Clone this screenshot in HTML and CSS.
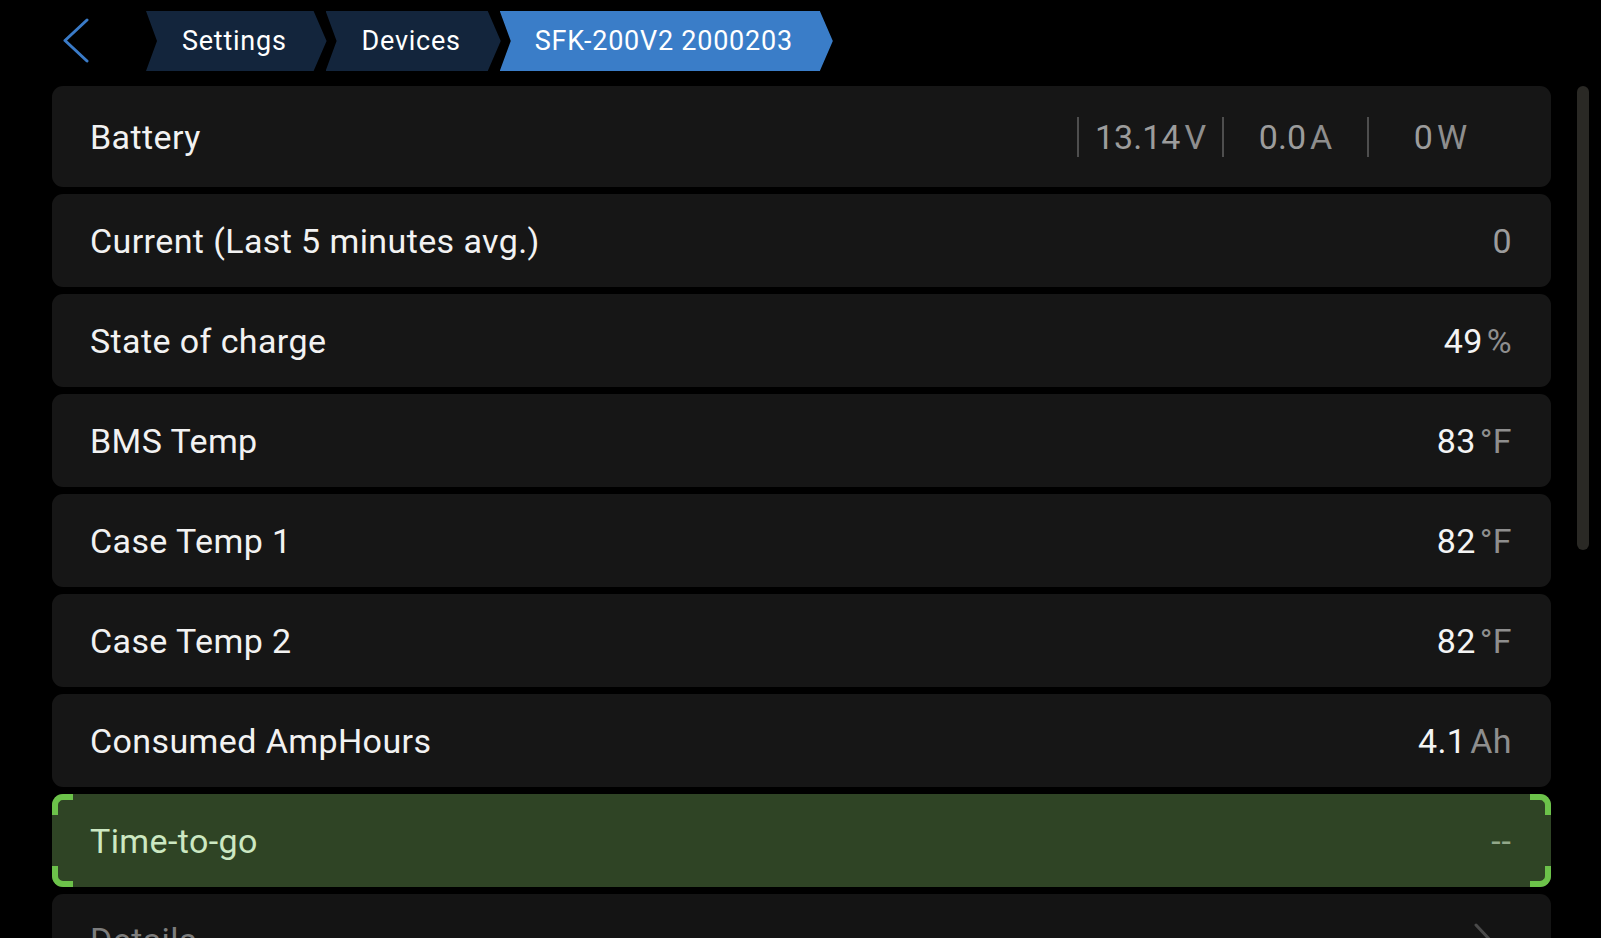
FILE: index.html
```html
<!DOCTYPE html>
<html>
<head>
<meta charset="utf-8">
<link rel="stylesheet" href="styles.css">
</head>
<body>
<div class="screen">
  <header class="header">
    <svg class="back" width="28" height="46" viewBox="0 0 28 46"><path d="M25 2 L3 22.5 L25 43" fill="none" stroke="#3a7bc8" stroke-width="3" stroke-linecap="round" stroke-linejoin="round"/></svg>
    <nav class="crumbs">
      <div class="crumb dark">Settings</div>
      <div class="crumb dark">Devices</div>
      <div class="crumb active">SFK-200V2 2000203</div>
    </nav>
  </header>
  <div class="body">
    <div class="list">
      <div class="row tall">
        <span class="label">Battery</span>
        <div class="cells">
          <div class="cell"><span class="dim">13.14</span><span class="unit">V</span></div>
          <div class="cell"><span class="dim">0.0</span><span class="unit">A</span></div>
          <div class="cell"><span class="dim">0</span><span class="unit">W</span></div>
        </div>
      </div>
      <div class="row">
        <span class="label">Current (Last 5 minutes avg.)</span>
        <span class="value"><span class="dim">0</span></span>
      </div>
      <div class="row">
        <span class="label">State of charge</span>
        <span class="value"><span class="num">49</span><span class="unit">%</span></span>
      </div>
      <div class="row">
        <span class="label">BMS Temp</span>
        <span class="value"><span class="num">83</span><span class="unit">°F</span></span>
      </div>
      <div class="row">
        <span class="label">Case Temp 1</span>
        <span class="value"><span class="num">82</span><span class="unit">°F</span></span>
      </div>
      <div class="row">
        <span class="label">Case Temp 2</span>
        <span class="value"><span class="num">82</span><span class="unit">°F</span></span>
      </div>
      <div class="row">
        <span class="label">Consumed AmpHours</span>
        <span class="value"><span class="num">4.1</span><span class="unit">Ah</span></span>
      </div>
      <div class="row focus">
        <span class="label">Time-to-go</span>
        <span class="value"><span class="dash">--</span></span>
        <span class="corner tl"></span><span class="corner tr"></span>
        <span class="corner bl"></span><span class="corner br"></span>
      </div>
      <div class="row details">
        <span class="label">Details</span>
        <svg class="chev" width="20" height="40" viewBox="0 0 20 40"><path d="M2 2 L17 18 L2 34" fill="none" stroke="#4a4a4a" stroke-width="3" stroke-linecap="round"/></svg>
      </div>
    </div>
    <div class="scrollbar"></div>
  </div>
</div>
</body>
</html>
```
FILE: styles.css
```css
html, body {
  margin: 0;
  padding: 0;
  background: #000;
}
body {
  width: 1601px;
  height: 938px;
  overflow: hidden;
  font-family: Roboto, "Noto Sans", sans-serif;
}
.screen {
  display: flex;
  flex-direction: column;
}
.header {
  height: 82px;
  display: flex;
  align-items: center;
  padding-left: 62px;
}
.back {
  display: block;
  margin-right: 56px;
}
.crumbs {
  display: flex;
  height: 60px;
}
.crumb {
  height: 60px;
  display: flex;
  align-items: center;
  padding: 0 40px 0 36px;
  font-size: 27px;
  letter-spacing: 0.75px;
  color: #fff;
  clip-path: polygon(0 0, calc(100% - 13px) 0, 100% 50%, calc(100% - 13px) 100%, 0 100%, 11px 50%);
}
.crumb + .crumb {
  margin-left: -1px;
}
.crumb.dark {
  background: #13253c;
}
.crumb.active {
  background: #3a7dc8;
  padding-left: 35px;
}
.body {
  display: flex;
  padding: 4px 0 0 52px;
  gap: 26px;
}
.list {
  width: 1499px;
  display: flex;
  flex-direction: column;
  gap: 7px;
}
.row {
  position: relative;
  height: 93px;
  flex: none;
  box-sizing: border-box;
  display: flex;
  align-items: center;
  justify-content: space-between;
  padding: 0 39px 0 38px;
  background: #161616;
  border-radius: 11px;
  font-size: 34px;
  letter-spacing: 0.4px;
  color: #f2f2f2;
}
.row.tall {
  height: 101px;
}
.cells {
  display: flex;
  letter-spacing: 0;
}
.cell {
  width: 145px;
  height: 40px;
  box-sizing: border-box;
  border-left: 2px solid #4e4e4e;
  display: flex;
  align-items: center;
  justify-content: center;
}
.value {
  display: flex;
  align-items: baseline;
}
.num {
  color: #f4f4f4;
}
.dim {
  color: #9c9c9c;
}
.unit {
  color: #8e8e8e;
  margin-left: 4px;
}
.row.focus {
  background: #2f4425;
  color: #cce8c2;
}
.dash {
  color: #93a88a;
  letter-spacing: 1px;
}
.corner {
  position: absolute;
  width: 21px;
  height: 21px;
  box-sizing: border-box;
  border: 0 solid #6cc24a;
}
.corner.tl { left: 0; top: 0; border-top-width: 6px; border-left-width: 6px; border-top-left-radius: 11px; }
.corner.tr { right: 0; top: 0; border-top-width: 6px; border-right-width: 6px; border-top-right-radius: 11px; }
.corner.bl { left: 0; bottom: 0; border-bottom-width: 6px; border-left-width: 6px; border-bottom-left-radius: 11px; }
.corner.br { right: 0; bottom: 0; border-bottom-width: 6px; border-right-width: 6px; border-bottom-right-radius: 11px; }
.row.details {
  align-items: flex-start;
  padding-top: 26px;
  color: #7d7d7d;
  background: #141414;
}
.chev {
  display: block;
  margin-top: 3px;
  margin-right: 18px;
}
.scrollbar {
  width: 12px;
  height: 464px;
  border-radius: 6px;
  background: #2a2925;
}
```
